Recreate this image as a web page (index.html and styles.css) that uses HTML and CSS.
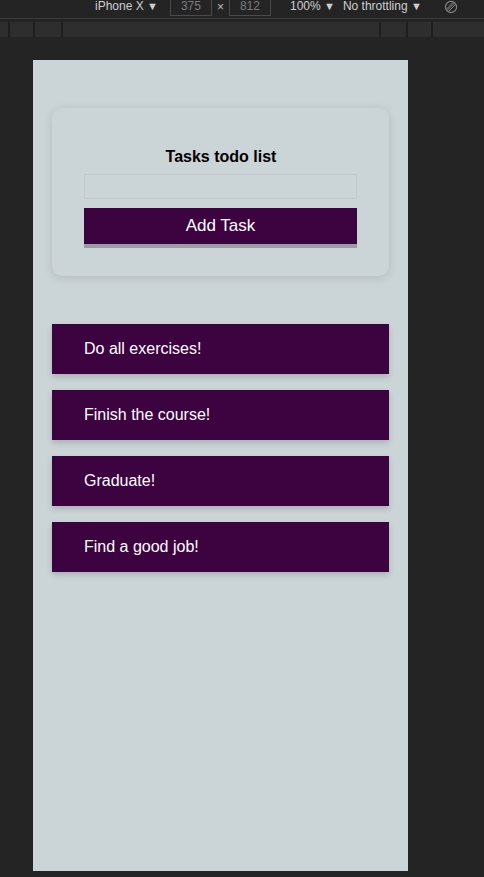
FILE: index.html
```html
<!DOCTYPE html>
<html>
<head>
<meta charset="utf-8">
<link rel="stylesheet" href="styles.css">
</head>
<body>
<div class="toolbar">
  <span class="tb-item device">iPhone X <span class="caret">▼</span></span>
  <span class="dim">375</span>
  <span class="times">×</span>
  <span class="dim">812</span>
  <span class="tb-item zoom">100% <span class="caret">▼</span></span>
  <span class="tb-item throttle">No throttling <span class="caret">▼</span></span>
  <svg class="rotate" width="14" height="14" viewBox="0 0 14 14">
    <circle cx="7" cy="7" r="5.6" fill="none" stroke="#8a8a8a" stroke-width="1.1"/>
    <path d="M3 10.5 L10.5 3 M4.5 11.5 L11.5 4.5 M2.5 9 L9 2.5" stroke="#8a8a8a" stroke-width="1"/>
  </svg>
</div>
<div class="rulerbar">
  <div class="seg s1"></div>
  <div class="seg s2"></div>
  <div class="seg s3"></div>
  <div class="seg s4"></div>
  <div class="seg s5"></div>
  <div class="seg s6"></div>
  <div class="seg s7"></div>
</div>
<div class="viewport">
  <div class="screen">
    <div class="card">
      <h1 class="title">Tasks todo list</h1>
      <input class="task-input" type="text">
      <button class="add-btn">Add Task</button>
    </div>
    <ul class="tasks">
      <li class="task">Do all exercises!</li>
      <li class="task">Finish the course!</li>
      <li class="task">Graduate!</li>
      <li class="task">Find a good job!</li>
    </ul>
  </div>
</div>
</body>
</html>
```
FILE: styles.css
```css
html, body {
  margin: 0;
  padding: 0;
  background: #242424;
  height: 877px;
  overflow: hidden;
}
.toolbar {
  height: 18px;
  border-bottom: 1px solid #3a3a3a;
  display: flex;
  align-items: flex-start;
  font-family: "Liberation Sans", Arial, sans-serif;
  font-size: 12px;
  line-height: 13px;
  color: #cfcfcf;
}
.tb-item { white-space: nowrap; }
.caret { font-size: 11px; }
.device { margin-left: 95px; }
.dim {
  box-sizing: border-box;
  height: 16px;
  border: 1px solid #4a4a4a;
  border-top: none;
  width: 42px;
  text-align: center;
  color: #7c7c7c;
  line-height: 13px;
}
.device + .dim { margin-left: 12px; }
.times { margin: 1px 5px 0; color: #bdbdbd; }
.zoom { margin-left: 19px; }
.throttle { margin-left: 8px; }
.rotate { margin-left: 22px; margin-top: 0; }
.rulerbar {
  margin-top: 3px;
  height: 15px;
  display: flex;
  gap: 2px;
  background: #1e1e1e;
}
.seg { background: #2e2e2e; height: 15px; }
.s1 { width: 8px; }
.s2 { width: 23px; }
.s3 { width: 26px; }
.s4 { flex: 1; }
.s5 { width: 25px; }
.s6 { width: 23px; }
.s7 { width: 51px; }
.viewport {
  padding-top: 23px;
  padding-left: 33px;
}
.screen {
  width: 375px;
  height: 811px;
  background: #cbd4d7;
  padding: 48px 19px 0;
  box-sizing: border-box;
  font-family: "Liberation Sans", Arial, sans-serif;
}
.card {
  box-sizing: border-box;
  height: 168px;
  border-radius: 10px;
  background: #cbd4d7;
  box-shadow: 0 2px 10px rgba(0, 0, 0, 0.12);
  padding: 40px 32px 0;
  display: flex;
  flex-direction: column;
}
.title {
  margin: 0;
  font-size: 16px;
  font-weight: bold;
  text-align: center;
  color: #000;
  line-height: 18px;
  padding-left: 1px;
}
.task-input {
  margin: 8px 0 0;
  height: 25px;
  box-sizing: border-box;
  border: 1px solid #c3c9cb;
  background: transparent;
  outline: none;
  padding: 0;
}
.add-btn {
  margin-top: 9px;
  height: 40px;
  box-sizing: border-box;
  border: none;
  border-bottom: 4px solid #979fa2;
  background: #3d0240;
  color: #fff;
  font-family: "Liberation Sans", Arial, sans-serif;
  font-size: 17px;
  padding: 0;
  cursor: pointer;
}
.tasks {
  list-style: none;
  margin: 48px 0 0;
  padding: 0;
  display: flex;
  flex-direction: column;
  gap: 16px;
}
.task {
  height: 50px;
  background: #3d0240;
  color: #fff;
  font-size: 16px;
  display: flex;
  align-items: center;
  padding-left: 32px;
  box-shadow: 0 3px 6px rgba(0, 0, 0, 0.16);
}
```
